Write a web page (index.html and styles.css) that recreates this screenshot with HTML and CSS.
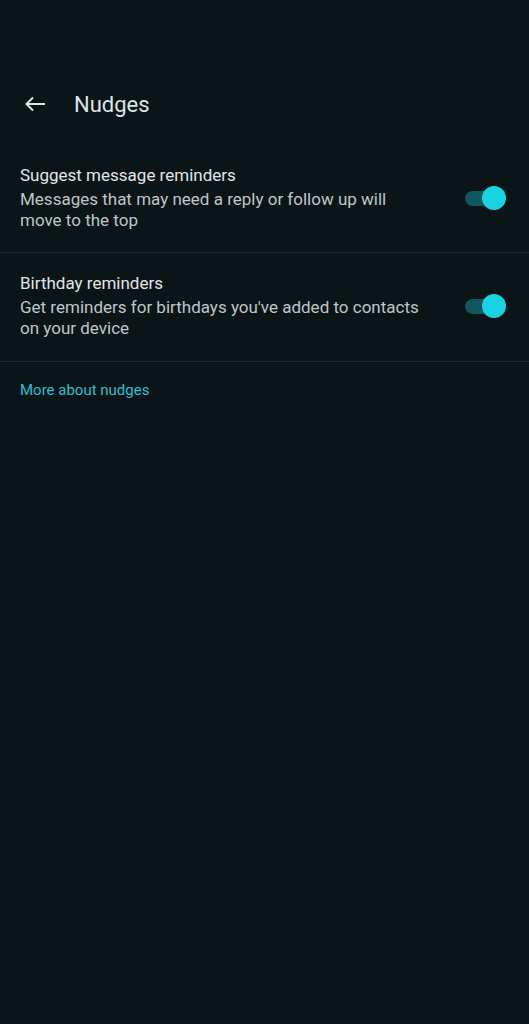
FILE: index.html
```html
<!DOCTYPE html>
<html lang="en">
<head>
<meta charset="utf-8">
<title>Nudges</title>
<link rel="stylesheet" href="styles.css">
</head>
<body>
<div class="screen">
  <header class="appbar">
    <button class="back" aria-label="Back">
      <svg width="22" height="16" viewBox="0 0 22 16"><path d="M21 8H2.5M9 1.5L2.5 8 9 14.5" fill="none" stroke="#dfe4e5" stroke-width="2"/></svg>
    </button>
    <h1 class="title">Nudges</h1>
  </header>
  <div class="item first">
    <div class="texts">
      <div class="item-title">Suggest message reminders</div>
      <div class="item-sub">Messages that may need a reply or follow up will move to the top</div>
    </div>
    <div class="switch"><span class="track"></span><span class="thumb"></span></div>
  </div>
  <div class="item second">
    <div class="texts">
      <div class="item-title">Birthday reminders</div>
      <div class="item-sub">Get reminders for birthdays you've added to contacts on your device</div>
    </div>
    <div class="switch"><span class="track"></span><span class="thumb"></span></div>
  </div>
  <a class="more" href="#">More about nudges</a>
</div>
</body>
</html>
```
FILE: styles.css
```css
html, body {
  margin: 0;
  padding: 0;
  background: #0b1518;
}
body {
  font-family: Roboto, "Noto Sans", sans-serif;
  color: #e1e5e6;
}
.screen {
  width: 529px;
  min-height: 1024px;
  background: #0b1518;
  padding-top: 72px;
  box-sizing: border-box;
}
.appbar {
  height: 64px;
  display: flex;
  align-items: center;
}
.back {
  background: none;
  border: 0;
  padding: 0;
  margin-left: 24px;
  width: 22px;
  height: 16px;
  display: flex;
  align-items: center;
  justify-content: center;
}
.title {
  margin: 0 0 0 28px;
  font-size: 22px;
  font-weight: 400;
  color: #dfe4e5;
}
.item {
  display: flex;
  align-items: center;
  padding: 19px 23px 22px 20px;
  border-bottom: 1px solid #1e2a2d;
}
.item.first {
  padding-top: 28px;
  padding-bottom: 21px;
}
.texts {
  flex: 1;
  padding-right: 40px;
}
.item-title {
  font-size: 17px;
  line-height: 22px;
  color: #e1e5e6;
}
.item-sub {
  margin-top: 3px;
  font-size: 17px;
  line-height: 21px;
  color: #bec6c8;
}
.switch {
  position: relative;
  width: 41px;
  height: 24px;
  flex: none;
}
.track {
  position: absolute;
  left: 0;
  top: 5px;
  width: 36px;
  height: 15px;
  border-radius: 8px;
  background: #0f5860;
}
.thumb {
  position: absolute;
  right: 0;
  top: 0;
  width: 24px;
  height: 24px;
  border-radius: 50%;
  background: #19d3e3;
}
.more {
  display: block;
  margin: 18px 0 0 20px;
  font-size: 15px;
  line-height: 20px;
  color: #2bbfcf;
  text-decoration: none;
}
```
